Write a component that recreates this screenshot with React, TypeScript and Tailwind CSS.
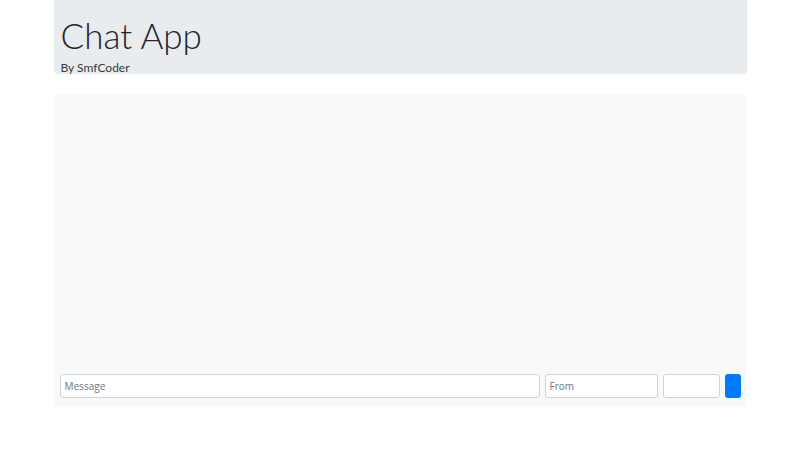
export default function App() {
  return (
    <div className="min-h-screen bg-white" style={{ fontFamily: '"Open Sans", "Noto Sans", sans-serif' }}>
      <div className="mx-auto w-[693px]">
        <div className="h-[74px] rounded-b-[4px] bg-[#e9ecef] px-[7px] pt-[13px]" style={{ fontFamily: 'Lato, "Open Sans", sans-serif' }}>
          <h1 className="text-[35px] font-light leading-[44px] text-[#212529]">Chat App</h1>
          <p className="mt-[3px] text-[12px] leading-[16px] text-[#343a40]">By SmfCoder</p>
        </div>
        <div className="mt-[21px] flex h-[312px] flex-col justify-end bg-[#f8f9fa] px-[6px] pb-[9px]">
          <div className="flex items-center gap-[5px]">
            <input
              placeholder="Message"
              className="h-[24px] w-[480px] rounded-[3px] border border-[#ced4da] bg-white px-[4px] text-[10px] text-[#495057] outline-none placeholder:text-[#6c757d]"
            />
            <input
              placeholder="From"
              className="h-[24px] w-[113px] rounded-[3px] border border-[#ced4da] bg-white px-[4px] text-[10px] text-[#495057] outline-none placeholder:text-[#6c757d]"
            />
            <input className="h-[24px] w-[57px] rounded-[3px] border border-[#ced4da] bg-white px-[4px] text-[10px] outline-none" />
            <button className="h-[24px] w-[16px] rounded-[3px] bg-[#007bff]" />
          </div>
        </div>
      </div>
    </div>
  );
}
